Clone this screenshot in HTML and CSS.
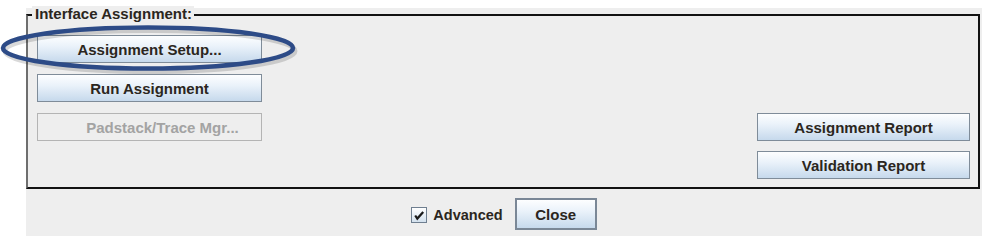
FILE: index.html
```html
<!DOCTYPE html>
<html>
<head>
<meta charset="utf-8">
<link rel="stylesheet" href="styles.css">
</head>
<body>
<div class="panel">
  <div class="group">
    <span class="legend">Interface Assignment:</span>
    <div class="cols">
      <div class="col left">
        <button class="btn wide">Assignment Setup...</button>
        <button class="btn wide">Run Assignment</button>
        <button class="btn wide disabled">Padstack/Trace Mgr...</button>
      </div>
      <div class="col right">
        <button class="btn report">Assignment Report</button>
        <button class="btn report">Validation Report</button>
      </div>
    </div>
  </div>
  <div class="footer">
    <label class="check">
      <span class="box"><svg width="12" height="12" viewBox="0 0 12 12"><path d="M2.2 6.5 L4.3 9.6 L10.2 3" fill="none" stroke="#1a1a1a" stroke-width="2.2"/></svg></span>
      <span class="check-label">Advanced</span>
    </label>
    <button class="btn close">Close</button>
  </div>
</div>
<svg class="highlight" width="300" height="56" viewBox="0 0 300 56">
  <ellipse cx="149" cy="26" rx="145" ry="20.5" fill="none" stroke="rgba(0,0,0,0.15)" stroke-width="5" transform="translate(1,2)"/>
  <ellipse cx="148" cy="25" rx="145" ry="20.5" fill="none" stroke="#2d4b87" stroke-width="4.6"/>
</svg>
</body>
</html>
```
FILE: styles.css
```css
html, body {
  margin: 0;
  padding: 0;
  background: #ffffff;
}
body {
  position: relative;
  width: 989px;
  height: 243px;
  font-family: "Liberation Sans", Arial, sans-serif;
  color: #2b2620;
}
.panel {
  margin: 8px 0 0 26px;
  width: 956px;
  height: 228px;
  background: #eeeeee;
  display: flex;
  flex-direction: column;
}
.group {
  position: relative;
  margin-top: 6px;
  width: 954px;
  box-sizing: border-box;
  border: 2px solid #121212;
  border-left-color: #6e6e6e;
  padding: 19px 8px 8px 9px;
}
.legend {
  position: absolute;
  top: -10px;
  left: 4px;
  padding: 0 2px 0 3px;
  background: #eeeeee;
  font-weight: bold;
  font-size: 15px;
  line-height: 16px;
}
.cols {
  display: flex;
  justify-content: space-between;
  align-items: flex-start;
}
.col {
  display: flex;
  flex-direction: column;
}
.col.left { gap: 11px; }
.col.right { gap: 10px; margin-top: 78px; }
.btn {
  box-sizing: border-box;
  height: 28px;
  margin: 0;
  padding: 1px 0 0 0;
  border: 1px solid #7f8c99;
  background: linear-gradient(to bottom, #fdfeff 0%, #eaf2fa 40%, #c6d9ec 100%);
  font-family: "Liberation Sans", Arial, sans-serif;
  font-weight: bold;
  font-size: 15px;
  color: #2b2620;
  text-align: center;
}
.btn.wide { width: 225px; }
.btn.report { width: 213px; }
.btn.disabled {
  background: #eeeeee;
  border-color: #b4b4b4;
  color: #a3a3a3;
  padding-left: 26px;
}
.footer {
  flex: 1;
  display: flex;
  justify-content: center;
  align-items: flex-start;
  padding-top: 9px;
  gap: 12px;
}
.check {
  display: flex;
  align-items: center;
  gap: 6px;
  height: 32px;
  padding-top: 1px;
  font-weight: bold;
  font-size: 14.5px;
}
.box {
  box-sizing: border-box;
  width: 16px;
  height: 16px;
  border: 1px solid #6f7f90;
  background: linear-gradient(to bottom, #ffffff, #d3e1ee);
  display: flex;
  align-items: center;
  justify-content: center;
}
.btn.close {
  width: 82px;
  height: 32px;
  border: 2px solid #7a8796;
}
.highlight {
  position: absolute;
  left: 0;
  top: 23px;
  pointer-events: none;
}
```
